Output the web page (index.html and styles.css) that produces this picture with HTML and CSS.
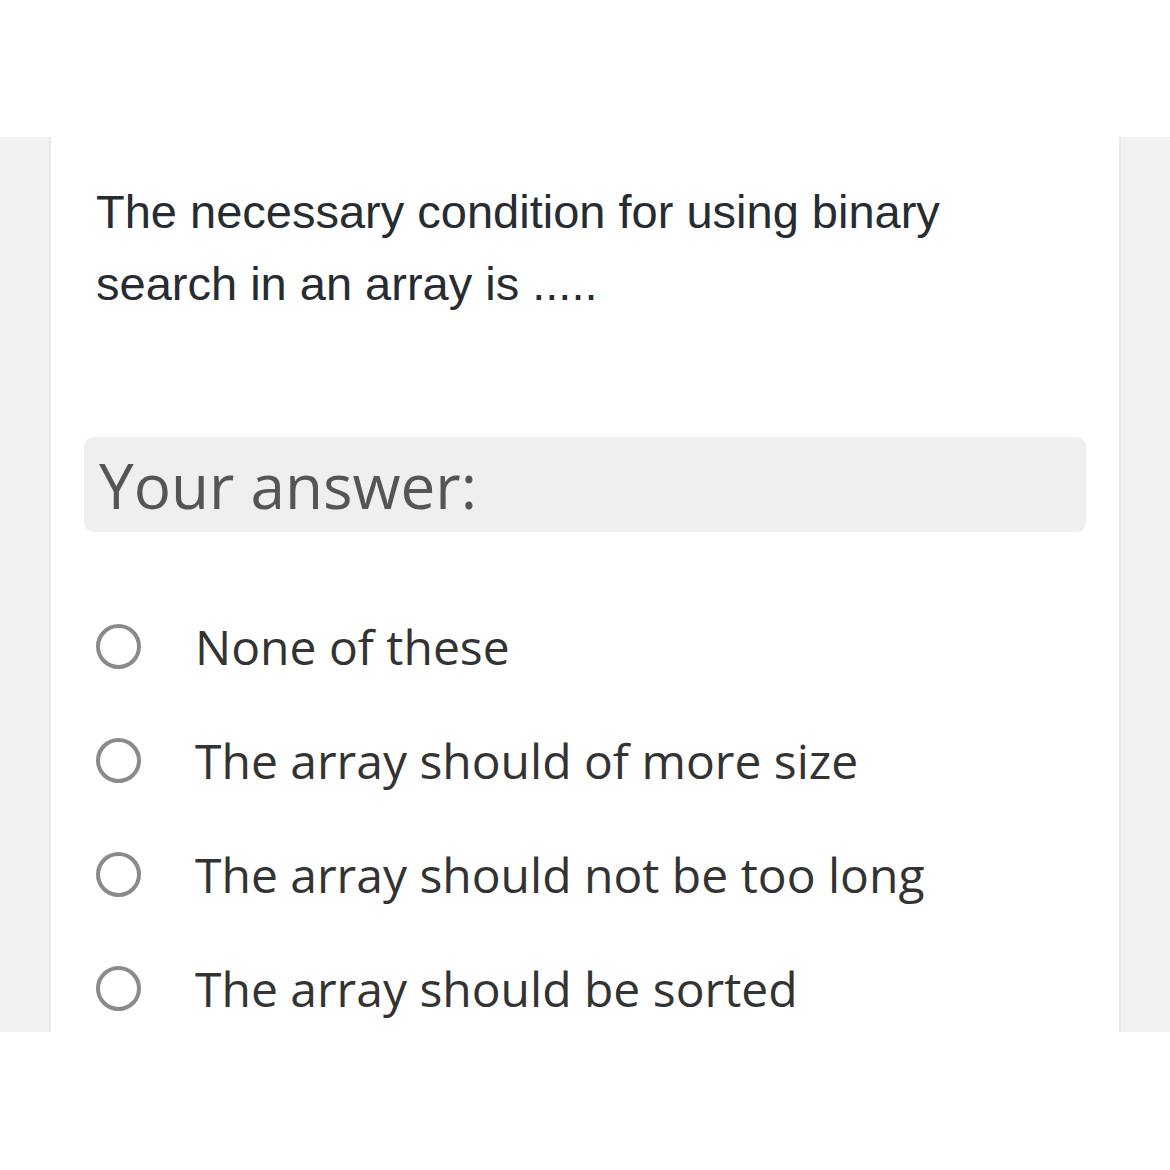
FILE: index.html
```html
<!DOCTYPE html>
<html lang="en">
<head>
    <meta charset="UTF-8">
    <meta name="viewport" content="width=device-width, initial-scale=1.0">
    <title>Quiz question</title>
    <link rel="stylesheet" href="styles.css">
</head>
<body>
  <div class="top"></div>
  <div class="page">
    <div class="side"></div>
    <div class="card">
      <p class="question">The necessary condition for using binary search in an array is .....</p>
      <div class="answer">Your answer:</div>
      <div class="options">
        <label class="opt"><span class="radio"></span>None of these</label>
        <label class="opt"><span class="radio"></span>The array should of more size</label>
        <label class="opt"><span class="radio"></span>The array should not be too long</label>
        <label class="opt"><span class="radio"></span>The array should be sorted</label>
      </div>
    </div>
    <div class="side"></div>
  </div>
</body>
</html>
```

FILE: styles.css
```css
body{
    margin: 0;
    background-color: #fff;
}
.top{
    height: 137px;
}
.page{
    display: flex;
    height: 895px;
    overflow: hidden;
}
.side{
    width: 49px;
    background-color: #f2f2f2;
}
.card{
    flex: 1;
    background-color: #fff;
    border-left: 2px solid #e8e8e8;
    border-right: 2px solid #e8e8e8;
    padding: 39px 33px 0 33px;
}
.question{
    margin: 0 0 117px 12px;
    font-family: "Liberation Sans", Arial, sans-serif;
    font-size: 47px;
    line-height: 72px;
    color: #272c33;
    width: 880px;
}
.answer{
    background-color: #efefef;
    border-radius: 9px;
    height: 95px;
    padding: 0 15px;
    display: flex;
    align-items: center;
    font-family: "Open Sans", sans-serif;
    font-size: 62px;
    color: #555;
}
.options{
    margin-top: 57px;
    display: flex;
    flex-direction: column;
}
.opt{
    height: 114px;
    display: flex;
    align-items: center;
    padding-left: 12px;
    font-family: "Open Sans", sans-serif;
    font-size: 48px;
    color: #333;
}
.radio{
    width: 37px;
    height: 37px;
    border: 4px solid #8a8a8d;
    border-radius: 50%;
    margin-right: 54px;
    flex-shrink: 0;
}
```
